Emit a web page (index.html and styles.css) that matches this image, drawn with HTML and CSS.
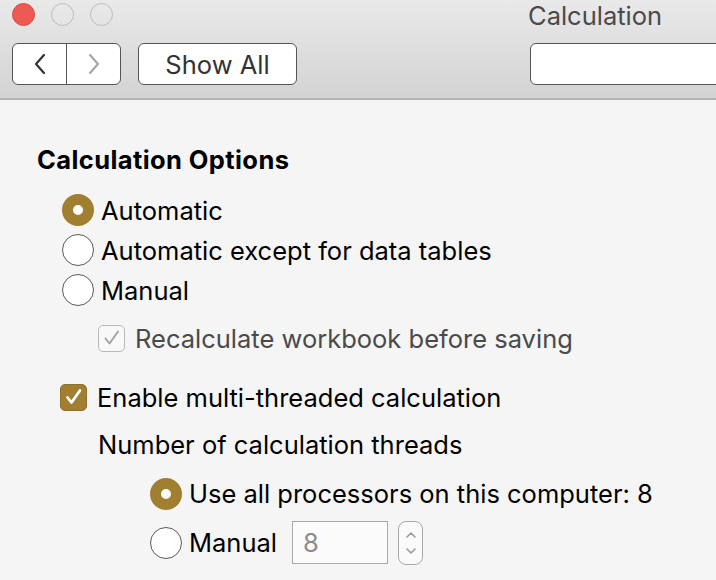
FILE: index.html
```html
<!DOCTYPE html>
<html>
<head>
<meta charset="utf-8">
<link rel="stylesheet" href="styles.css">
</head>
<body>
<div class="window">
  <div class="toolbar">
    <div class="top-row">
      <span class="light red"></span>
      <span class="light"></span>
      <span class="light"></span>
      <span class="title">Calculation</span>
    </div>
    <div class="btn-row">
      <div class="segmented">
        <div class="seg">
          <svg width="16" height="24" viewBox="0 0 16 24"><path d="M12 3 L4 12 L12 21" fill="none" stroke="#333" stroke-width="2.2" stroke-linecap="round" stroke-linejoin="round"/></svg>
        </div>
        <div class="seg">
          <svg width="16" height="24" viewBox="0 0 16 24"><path d="M4 3 L12 12 L4 21" fill="none" stroke="#a8a8a8" stroke-width="2.2" stroke-linecap="round" stroke-linejoin="round"/></svg>
        </div>
      </div>
      <div class="button">Show All</div>
      <div class="search"></div>
    </div>
  </div>
  <div class="content">
    <h1 class="heading">Calculation Options</h1>
    <div class="group radios">
      <div class="row"><span class="radio on"></span><span>Automatic</span></div>
      <div class="row"><span class="radio"></span><span>Automatic except for data tables</span></div>
      <div class="row"><span class="radio"></span><span>Manual</span></div>
    </div>
    <div class="row sub disabled">
      <span class="check dim"><svg width="24" height="24" viewBox="0 0 24 24"><path d="M5.5 12.5 L9.5 17.5 L18 5.5" fill="none" stroke="#a3a3a3" stroke-width="2" stroke-linecap="round" stroke-linejoin="round"/></svg></span>
      <span>Recalculate workbook before saving</span>
    </div>
    <div class="row multi">
      <span class="check on"><svg width="24" height="24" viewBox="0 0 24 24"><path d="M5.5 12.5 L9.5 17.5 L18 5.5" fill="none" stroke="#fff" stroke-width="2.8" stroke-linecap="round" stroke-linejoin="round"/></svg></span>
      <span>Enable multi-threaded calculation</span>
    </div>
    <div class="threads-label">Number of calculation threads</div>
    <div class="group threads">
      <div class="row"><span class="radio on"></span><span>Use all processors on this computer: 8</span></div>
      <div class="row"><span class="radio"></span><span>Manual</span>
        <span class="numfield">8</span>
        <span class="stepper">
          <svg width="22" height="42" viewBox="0 0 22 42"><path d="M7 15 L11 11 L15 15" fill="none" stroke="#9a9a9a" stroke-width="1.6" stroke-linecap="round" stroke-linejoin="round"/><path d="M7 27 L11 31 L15 27" fill="none" stroke="#9a9a9a" stroke-width="1.6" stroke-linecap="round" stroke-linejoin="round"/></svg>
        </span>
      </div>
    </div>
  </div>
</div>
</body>
</html>
```

FILE: styles.css
```css
html, body {
  margin: 0;
  padding: 0;
  background: #f5f5f5;
  overflow: hidden;
}
body {
  width: 716px;
  height: 580px;
  font-family: "Inter", "Liberation Sans", sans-serif;
  font-size: 25.5px;
  color: #000;
}
.toolbar {
  height: 100px;
  box-sizing: border-box;
  border-bottom: 2px solid #b3b3b3;
  background: linear-gradient(#e9e9e9, #d3d3d3);
  padding: 2px 0 0 12px;
}
.top-row {
  display: flex;
  align-items: center;
  height: 24px;
  gap: 16px;
}
.light {
  width: 21px;
  height: 21px;
  border-radius: 50%;
  border: 1.5px solid #bdbdbd;
  flex: none;
}
.light.red {
  background: #ed5a53;
  border-color: #d84a43;
}
.title {
  margin-left: 399px;
  margin-top: 2px;
  color: #4a4a4a;
  white-space: nowrap;
}
.btn-row {
  display: flex;
  margin-top: 17px;
  height: 42px;
}
.btn-row > * {
  flex: none;
}
.segmented {
  display: flex;
  width: 109px;
  box-sizing: border-box;
  border: 1.5px solid #555;
  border-radius: 6px;
  background: #fff;
}
.seg {
  flex: 1;
  display: flex;
  align-items: center;
  justify-content: center;
}
.seg + .seg {
  border-left: 1.5px solid #555;
}
.button {
  margin-left: 17px;
  width: 159px;
  box-sizing: border-box;
  border: 1.5px solid #555;
  border-radius: 6px;
  background: #fff;
  display: flex;
  align-items: center;
  justify-content: center;
  color: #333;
}
.search {
  margin-left: 233px;
  width: 200px;
  box-sizing: border-box;
  border: 1.5px solid #555;
  border-radius: 6px;
  background: #fff;
}
.content {
  padding: 44px 0 0 37px;
}
.heading {
  margin: 0;
  font-size: 25.5px;
  font-weight: 700;
  letter-spacing: 0.4px;
  line-height: 32px;
}
.row {
  display: flex;
  align-items: center;
  height: 40px;
  gap: 7px;
  white-space: nowrap;
}
.radios {
  margin-top: 14px;
  padding-left: 25px;
}
.radio {
  width: 32px;
  height: 32px;
  box-sizing: border-box;
  border-radius: 50%;
  border: 1.5px solid #5a5a5a;
  background: #fff;
  flex: none;
}
.radio.on {
  border: 11px solid #a07f30;
  background: #fff;
}
.sub {
  padding-left: 61px;
  margin-top: 8px;
  gap: 10px;
}
.disabled {
  color: #4a4a4a;
}
.check {
  width: 27px;
  height: 27px;
  box-sizing: border-box;
  border-radius: 5px;
  display: flex;
  align-items: center;
  justify-content: center;
  flex: none;
}
.check.dim {
  border: 1.5px solid #b8b8b8;
  background: #f8f8f8;
}
.check.on {
  background: #a07f30;
  border: 1px solid #8f7028;
}
.multi {
  padding-left: 23px;
  margin-top: 19px;
  gap: 10px;
}
.threads-label {
  padding-left: 61px;
  height: 48px;
  line-height: 48px;
  margin-top: 4px;
  white-space: nowrap;
}
.threads {
  padding-left: 113px;
}
.threads .row {
  height: 49px;
}
.numfield {
  margin-left: 8px;
  width: 96px;
  height: 43px;
  box-sizing: border-box;
  border: 1.5px solid #a9a9a9;
  background: #fbfbfb;
  color: #8a8a8a;
  padding-left: 10px;
  display: flex;
  align-items: center;
  flex: none;
}
.stepper {
  margin-left: 3px;
  width: 25px;
  height: 44px;
  box-sizing: border-box;
  border: 1.5px solid #a9a9a9;
  border-radius: 8px;
  background: #fafafa;
  display: flex;
  align-items: center;
  justify-content: center;
  flex: none;
}
```
